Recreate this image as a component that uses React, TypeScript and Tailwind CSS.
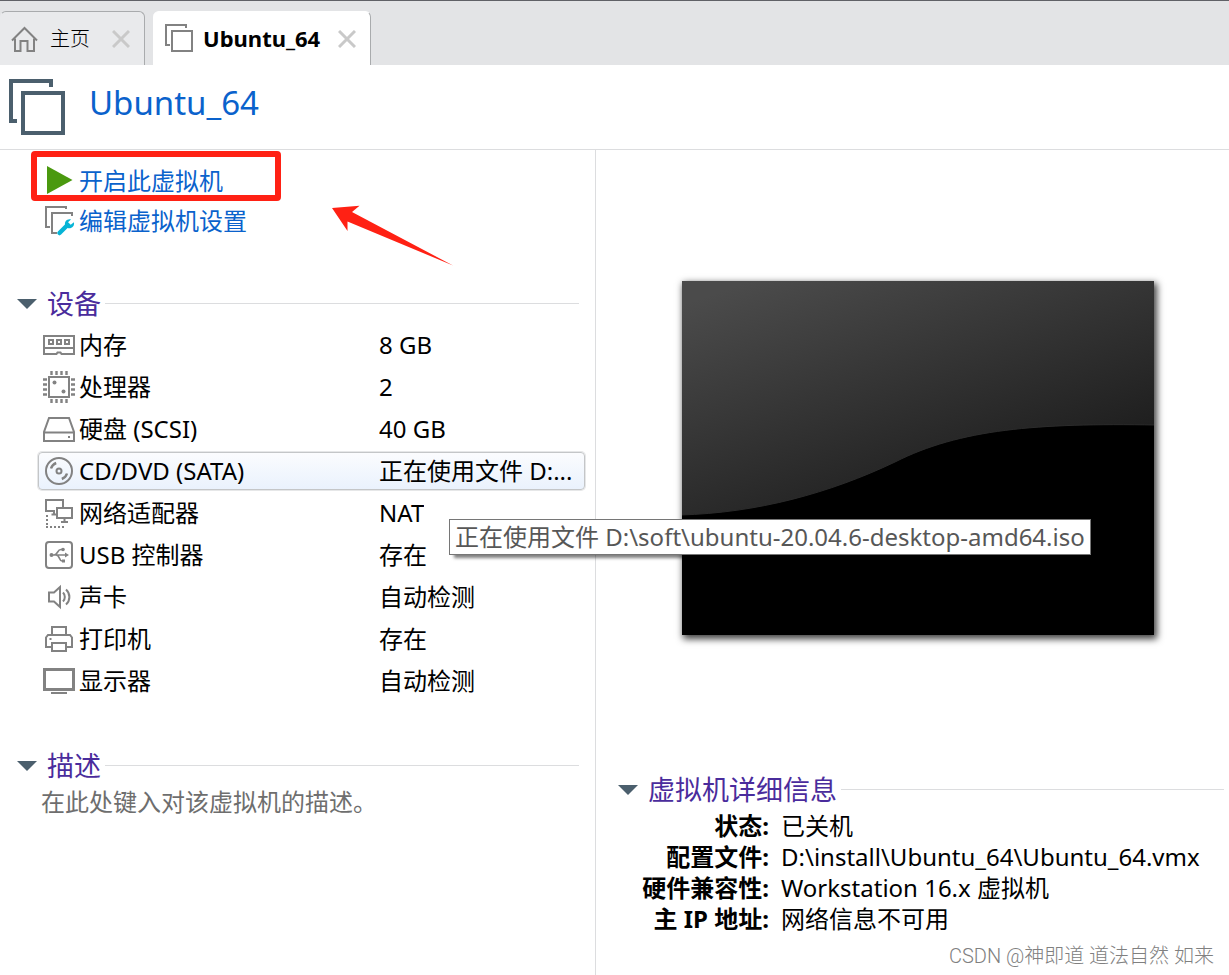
import { useState, type ReactNode } from "react";

function HomeIcon() {
  return (
    <svg width="28" height="28" viewBox="0 0 28 28" fill="none" stroke="#828282" strokeWidth="2" aria-hidden="true">
      <path d="M1 15.500 13.500 3 26 15.500" />
      <path d="M4 13.500V26h5.500V16h7v10H23V13.500" />
    </svg>
  );
}

function CloseIcon() {
  return (
    <svg width="18" height="18" viewBox="0 0 18 18" fill="none" stroke="#c9c9c9" strokeWidth="3" aria-hidden="true">
      <path d="M1 1 17 17M17 1 1 17" />
    </svg>
  );
}

function TabVmIcon() {
  return (
    <svg width="28" height="28" viewBox="0 0 28 28" fill="none" stroke="#828282" strokeWidth="2" aria-hidden="true">
      <path d="M21 4V1H1v20h4" />
      <rect x="7" y="7" width="20" height="20" />
    </svg>
  );
}

function VmIcon() {
  return (
    <svg width="56" height="56" viewBox="0 0 56 56" fill="none" stroke="#4b5f6d" strokeWidth="4" aria-hidden="true">
      <path d="M42 8V2H2v40h6" />
      <rect x="14" y="14" width="40" height="40" />
    </svg>
  );
}

function PlayIcon() {
  return (
    <svg width="32" height="32" viewBox="0 0 32 32" fill="#4a990f" aria-hidden="true">
      <path d="M4 1v28l25.500-14z" />
    </svg>
  );
}

function SettingsIcon() {
  return (
    <svg width="32" height="32" viewBox="0 0 32 32" fill="none" aria-hidden="true">
      <path d="M23 4V2H3v20h4" stroke="#828282" strokeWidth="2" />
      <path d="M14 28H9V8h20v3" stroke="#828282" strokeWidth="2" />
      <path d="m16.500 28 8-8" stroke="#06b4d6" strokeWidth="4.500" strokeLinecap="round" />
      <path
        d="M28 14.500c-3.800-1-7 2.200-5.800 6l2.300 2.500c3.800 1.300 7.400-1.900 6.400-5.800l-3.200 2.500-2.700-2.500z"
        fill="#06b4d6"
      />
    </svg>
  );
}

function DeviceSvg({ children }: { children: ReactNode }) {
  return (
    <svg
      className="shrink-0"
      width="32"
      height="32"
      viewBox="0 0 32 32"
      fill="none"
      stroke="#828282"
      strokeWidth="2"
      aria-hidden="true"
    >
      {children}
    </svg>
  );
}

function MemoryIcon() {
  return (
    <DeviceSvg>
      <path d="M1 7h30v18H18.500l-1-1.500h-3l-1 1.500H1zM1 19h30" />
      <path d="M6 11h4v4H6zM14 11h4v4h-4zM22 11h4v4h-4z" />
    </DeviceSvg>
  );
}

function CpuIcon() {
  return (
    <DeviceSvg>
      <rect x="6" y="6" width="20" height="20" />
      <path strokeWidth="2.400" d="M8.500 0v4M13.500 0v4M18.500 0v4M23.500 0v4M8.500 28v4M13.500 28v4M18.500 28v4M23.500 28v4" />
      <path strokeWidth="2.400" d="M0 8.500h4M0 13.500h4M0 18.500h4M0 23.500h4M28 8.500h4M28 13.500h4M28 18.500h4M28 23.500h4" />
      <circle cx="11.500" cy="11.500" r="2" fill="#828282" stroke="none" />
      <circle cx="20.500" cy="20.500" r="2" fill="#828282" stroke="none" />
    </DeviceSvg>
  );
}

function DiskIcon() {
  return (
    <DeviceSvg>
      <path d="M6 5h20l5 14v9H1v-9zM1 19.500h30" />
      <path d="M25 24h2" />
    </DeviceSvg>
  );
}

function DiscIcon() {
  return (
    <DeviceSvg>
      <circle cx="16" cy="16" r="13" />
      <circle cx="16" cy="16" r="2.500" />
      <path d="M8 13.500A8.500 8.500 0 0 1 13.200 8M24 18.500a8.500 8.500 0 0 1-5.200 5.500" strokeWidth="2.400" />
    </DeviceSvg>
  );
}

function NetworkIcon() {
  return (
    <DeviceSvg>
      <path d="M12 14H3V3h17v7" />
      <path d="M14 11h15v10H14zM21.500 21v4M18 25h7M8.500 17.500H13M11 14v3" />
      <path d="M4 18v12M3 30h18" strokeDasharray="2 2" />
    </DeviceSvg>
  );
}

function UsbIcon() {
  return (
    <DeviceSvg>
      <rect x="3" y="3" width="26" height="26" rx="3" />
      <path d="M9 16h13M11 16c4 0 3-5.500 7-5.500h1M13 16c4 0 3 6 6 6h2" strokeWidth="1.600" />
      <circle cx="8.500" cy="16" r="2" fill="#828282" stroke="none" />
      <circle cx="20" cy="10.500" r="1.800" fill="#828282" stroke="none" />
      <path d="M19 20.500h3v3h-3zM22 13.500v5l4-2.500z" fill="#828282" stroke="none" />
    </DeviceSvg>
  );
}

function SoundIcon() {
  return (
    <DeviceSvg>
      <path d="M6 11.500h5l6-5.500v20l-6-5.500H6z" />
      <path d="M20 11.500a6.500 6.500 0 0 1 0 9M23 8.500a10 10 0 0 1 0 15" />
    </DeviceSvg>
  );
}

function PrinterIcon() {
  return (
    <DeviceSvg>
      <path d="M9 12V4h14v8" />
      <path d="M9 24H3V14.500l2-2.500h22l2 2.500V24h-6" />
      <path d="M9 20h14v8H9zM6.500 16h2" />
    </DeviceSvg>
  );
}

function DisplayIcon() {
  return (
    <DeviceSvg>
      <rect x="1.500" y="4.500" width="29" height="20" strokeWidth="3" />
      <path d="M8 28h16" strokeWidth="2" />
    </DeviceSvg>
  );
}

const devices: { name: string; value: string; icon: ReactNode; path?: string }[] = [
  { name: "内存", value: "8 GB", icon: <MemoryIcon /> },
  { name: "处理器", value: "2", icon: <CpuIcon /> },
  { name: "硬盘 (SCSI)", value: "40 GB", icon: <DiskIcon /> },
  {
    name: "CD/DVD (SATA)",
    value: "正在使用文件 D:...",
    icon: <DiscIcon />,
    path: "正在使用文件 D:\\soft\\ubuntu-20.04.6-desktop-amd64.iso",
  },
  { name: "网络适配器", value: "NAT", icon: <NetworkIcon /> },
  { name: "USB 控制器", value: "存在", icon: <UsbIcon /> },
  { name: "声卡", value: "自动检测", icon: <SoundIcon /> },
  { name: "打印机", value: "存在", icon: <PrinterIcon /> },
  { name: "显示器", value: "自动检测", icon: <DisplayIcon /> },
];

const details = [
  ["状态:", "已关机"],
  ["配置文件:", "D:\\install\\Ubuntu_64\\Ubuntu_64.vmx"],
  ["硬件兼容性:", "Workstation 16.x 虚拟机"],
  ["主 IP 地址:", "网络信息不可用"],
];

function SectionHeading({ title }: { title: string }) {
  return (
    <h2 className="flex h-10 items-center">
      <button type="button" className="flex items-center gap-[10px] text-[27px] leading-10 text-[#4a2c9c]">
        <svg width="20" height="10" viewBox="0 0 20 10" fill="#4b5f6d" aria-hidden="true">
          <path d="M0 0h20L10 10z" />
        </svg>
        {title}
      </button>
      <span className="mb-[2px] ml-1 h-px flex-1 bg-[#dcdddf]" />
    </h2>
  );
}

function DeviceList() {
  const [selected, setSelected] = useState("CD/DVD (SATA)");
  return (
    <ul className="mt-[2px] -mr-[6px] ml-[21px] flex flex-col gap-1">
      {devices.map((device) => {
        const active = device.name === selected;
        return (
          <li key={device.name} className="relative">
            <button
              type="button"
              onClick={() => setSelected(device.name)}
              className={
                active
                  ? "flex h-[38px] w-full items-center rounded border border-[#c4c6c8] bg-linear-to-b from-[#fbfcfe] to-[#eaf2fd] pl-1 text-left ring-1 ring-[#e6e7e8]"
                  : "flex h-[38px] w-full items-center rounded border border-transparent pl-1 text-left"
              }
            >
              {device.icon}
              <span className="w-[304px] shrink-0 pl-1">{device.name}</span>
              <span className="truncate">{device.value}</span>
            </button>
            {active && device.path && (
              <div
                role="tooltip"
                className="absolute top-[67px] left-[411px] z-10 h-9 border border-[#767676] bg-white px-[5px] leading-[34px] whitespace-nowrap text-[#575757] shadow-[4px_4px_3px_-1px_rgba(0,0,0,0.5)]"
              >
                {device.path}
              </div>
            )}
          </li>
        );
      })}
    </ul>
  );
}

function ScreenPreview() {
  return (
    <svg
      className="aspect-[472/354] w-[472px] max-w-full shadow-[2px_3px_7px_1px_rgba(0,0,0,0.75)]"
      viewBox="0 0 472 354"
      role="img"
      aria-label="Ubuntu_64"
    >
      <defs>
        <linearGradient id="sheen" gradientUnits="userSpaceOnUse" x1="40" y1="10" x2="130" y2="264">
          <stop offset="0" stopColor="#4b4b4b" />
          <stop offset="1" stopColor="#1f1f1f" />
        </linearGradient>
      </defs>
      <rect width="472" height="354" fill="url(#sheen)" />
      <path
        d="M-2 234C75 232 148 212 213 181C278 148 355 142 474 144V356H-2z"
        fill="#000"
        stroke="#2b2b2b"
      />
    </svg>
  );
}

export default function App() {
  return (
    <div
      lang="zh-CN"
      className="relative flex min-h-screen flex-col overflow-hidden bg-white font-['Noto_Sans','Noto_Sans_CJK_SC',sans-serif] text-2xl text-black"
    >
      <nav className="flex h-[65px] items-end gap-2 border-t border-[#606167] bg-[#e3e4e6]">
        <div className="flex h-[54px] w-[145px] items-center rounded-t-md border border-b-0 border-l-transparent border-[#a9abad] bg-[#e9eaec] pl-[10px]">
          <a href="#home" className="flex items-center gap-[11px] text-xl font-light">
            <HomeIcon />
            主页
          </a>
          <button type="button" aria-label="关闭主页" className="ml-[22px]">
            <CloseIcon />
          </button>
        </div>
        <div className="flex h-[54px] w-[218px] items-center rounded-t-md border-t border-r border-t-white border-r-[#a9abad] bg-white pl-3">
          <a href="#vm" className="flex items-center gap-[10px] text-[22px] font-bold">
            <TabVmIcon />
            Ubuntu_64
          </a>
          <button type="button" aria-label="关闭 Ubuntu_64" className="mr-[14px] ml-auto">
            <CloseIcon />
          </button>
        </div>
      </nav>

      <header className="flex h-[85px] items-center gap-6 border-b border-[#dcdddf] pl-[9px]">
        <VmIcon />
        <h1 className="pb-2 text-[33px] text-[#0a62cc]">Ubuntu_64</h1>
      </header>

      <main className="grid flex-1 grid-cols-[596fr_633fr]">
        <section className="relative min-w-0 border-r border-[#dcdddf] pt-[11px] pr-4 pl-[17px]">
          <div className="ml-[26px] flex flex-col items-start text-[#0a62cc]">
            <button type="button" className="flex h-10 items-center gap-1">
              <PlayIcon />
              开启此虚拟机
            </button>
            <button type="button" className="flex h-10 items-center gap-1">
              <SettingsIcon />
              编辑虚拟机设置
            </button>
          </div>
          <div className="pointer-events-none absolute top-px left-[31px] h-[50px] w-[250px] rounded border-[6px] border-[#ff2114]" />
          <svg
            className="pointer-events-none absolute top-[55px] left-[331px]"
            width="124"
            height="62"
            viewBox="0 0 124 62"
            fill="#ff2114"
            aria-hidden="true"
          >
            <path d="M1 3 28.500.7 21 7 122 60.500 16.500 16.500V26z" />
          </svg>

          <div className="mt-[43px]">
            <SectionHeading title="设备" />
            <DeviceList />
          </div>
          <div className="mt-[46px]">
            <SectionHeading title="描述" />
            <input
              type="text"
              aria-label="描述"
              placeholder="在此处键入对该虚拟机的描述。"
              className="ml-6 block h-8 w-[400px] max-w-full placeholder:text-[#6e6e6e]"
            />
          </div>
        </section>

        <section className="min-w-0 pt-[131px] pr-[5px] pl-[22px]">
          <div className="flex justify-center pr-[6px]">
            <ScreenPreview />
          </div>
          <div className="mt-[135px]">
            <SectionHeading title="虚拟机详细信息" />
            <dl className="grid grid-cols-[151px_1fr] gap-x-3 leading-[31px]">
              {details.map(([label, value]) => (
                <div key={label} className="contents">
                  <dt className="text-right font-bold whitespace-nowrap">{label}</dt>
                  <dd className="whitespace-nowrap">{value}</dd>
                </div>
              ))}
            </dl>
          </div>
        </section>
      </main>

      <p className="absolute right-[15px] bottom-[3px] font-['Roboto','Noto_Sans_CJK_SC',sans-serif] text-xl leading-8 font-light text-[#808080]">
        CSDN @神即道 道法自然 如来
      </p>
    </div>
  );
}
